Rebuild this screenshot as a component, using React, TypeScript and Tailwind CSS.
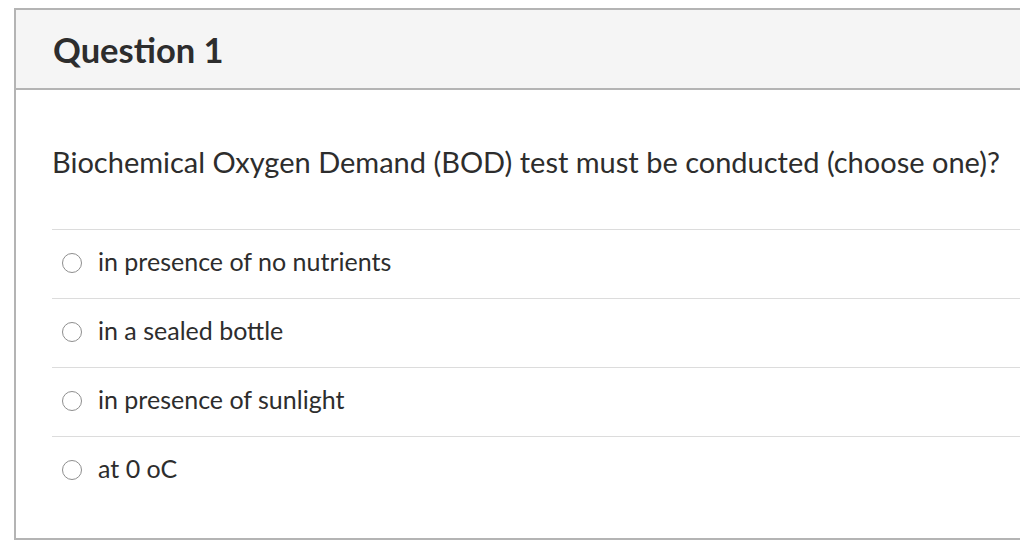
const answers = [
  'in presence of no nutrients',
  'in a sealed bottle',
  'in presence of sunlight',
  'at 0 oC',
];

export default function App() {
  return (
    <div
      className="min-h-[554px] w-[1020px] overflow-hidden bg-white pt-[8px] pl-[14px]"
      style={{ fontFamily: 'Lato, "Open Sans", sans-serif' }}
    >
      <div className="w-[1020px] border-t-2 border-b-2 border-l-2 border-[#b4b4b4]">
        {/* Header */}
        <div className="flex h-[80px] items-center border-b-2 border-[#b4b4b4] bg-[#f5f5f5] pl-[37px]">
          <h1 className="pt-[2px] text-[34.5px] leading-none font-bold text-[#2d2d2d]">Question 1</h1>
        </div>

        {/* Body */}
        <div className="pt-[55px] pb-[33px] pl-[36px]">
          <p className="text-[29px] leading-[34px] text-[#2d2d2d]">
            Biochemical Oxygen Demand (BOD) test must be conducted (choose one)?
          </p>
          <div className="mt-[50px]">
            {answers.map((a) => (
              <label
                key={a}
                className="flex h-[69px] items-center gap-[16px] border-t border-[#dcdcdc] pb-[5px] pl-[10px]"
              >
                <span className="mt-[3px] h-[20px] w-[20px] shrink-0 rounded-full border-[1.5px] border-[#8e8e8e] bg-white" />
                <span className="text-[25px] leading-none text-[#2d2d2d]">{a}</span>
              </label>
            ))}
          </div>
        </div>
      </div>
    </div>
  );
}
